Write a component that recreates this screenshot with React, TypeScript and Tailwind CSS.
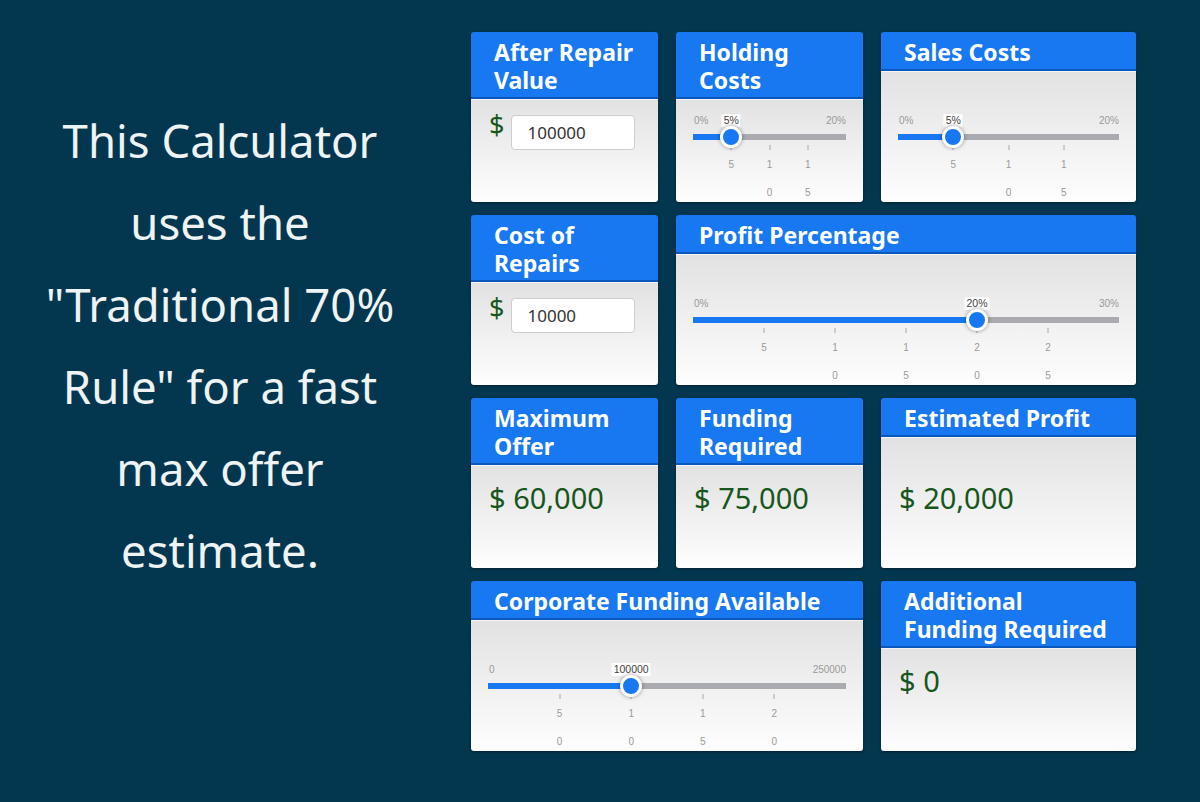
import React from "react";

type Tick = { at: number; top: string; bottom: string };

type SliderProps = {
  min: number;
  max: number;
  value: number;
  minLabel: string;
  maxLabel: string;
  valueLabel: string;
  ticks: Tick[];
};

const BLUE = "bg-[#1878f2]";

function Slider({ min, max, value, minLabel, maxLabel, valueLabel, ticks }: SliderProps) {
  const pct = (v: number) => ((v - min) / (max - min)) * 100;
  const p = pct(value);
  return (
    <div className="mt-auto px-[17px]">
      <div className="relative h-[90px] font-['Liberation_Sans',Arial,sans-serif]">
        <span className="absolute left-[1px] top-[3px] text-[10px] leading-[12px] text-[#9a9a9a]">{minLabel}</span>
        <span className="absolute right-0 top-[3px] text-[10px] leading-[12px] text-[#9a9a9a]">{maxLabel}</span>

        {/* track */}
        <div className="absolute left-0 right-0 top-[22px] h-[6px] bg-[#a9abb0]" />
        <div className={`absolute left-0 top-[22px] h-[6px] ${BLUE}`} style={{ width: `${p}%` }} />

        {/* scale */}
        {ticks.map((t) => (
          <React.Fragment key={t.at}>
            <div
              className="absolute top-[33px] h-[5px] w-px -translate-x-1/2 bg-[#a5a5a5]"
              style={{ left: `${pct(t.at)}%` }}
            />
            <span
              className="absolute top-[47px] -translate-x-1/2 text-[10px] leading-[12px] text-[#9a9a9a]"
              style={{ left: `${pct(t.at)}%` }}
            >
              {t.top}
            </span>
            <span
              className="absolute top-[75px] -translate-x-1/2 text-[10px] leading-[12px] text-[#9a9a9a]"
              style={{ left: `${pct(t.at)}%` }}
            >
              {t.bottom}
            </span>
          </React.Fragment>
        ))}

        {/* current value bubble */}
        <span
          className="absolute top-[2px] -translate-x-1/2 bg-white px-[2px] text-[10.5px] leading-[13px] text-[#444]"
          style={{ left: `${p}%` }}
        >
          {valueLabel}
        </span>

        {/* handle */}
        <div
          className={`absolute top-[14px] h-[22px] w-[22px] -translate-x-1/2 rounded-full border-[3px] border-white ${BLUE} shadow-[0_0_4px_rgba(0,0,0,0.4)]`}
          style={{ left: `${p}%` }}
        />
      </div>
    </div>
  );
}

function Card({
  title,
  className = "",
  bodyClass = "",
  children,
}: {
  title: React.ReactNode;
  className?: string;
  bodyClass?: string;
  children?: React.ReactNode;
}) {
  return (
    <div
      className={`flex flex-col overflow-hidden rounded-[3px] shadow-[0_1px_3px_rgba(0,0,0,0.4)] ${className}`}
    >
      <div className="border-b-2 border-[#0a58bb] bg-[#1878f2] pb-[3px] pl-[23px] pr-2 pt-[6px] text-[23px] font-bold leading-[28px] text-white">
        {title}
      </div>
      <div className={`flex flex-1 flex-col border-t border-[#f4f4f4] bg-linear-to-b from-[#e2e2e2] to-[#fefefe] ${bodyClass}`}>
        {children}
      </div>
    </div>
  );
}

function MoneyInput({ value }: { value: string }) {
  return (
    <div className="flex items-start gap-[7px] pl-[18px] pt-[15px]">
      <span className="-mt-[6px] text-[27px] leading-[32px] text-[#17561c]">$</span>
      <input
        readOnly
        defaultValue={value}
        className="h-[35px] w-[124px] rounded-[4px] border border-[#cdcdcd] bg-white pl-[15px] font-['Noto_Sans',sans-serif] text-[17px] text-[#333] outline-none"
      />
    </div>
  );
}

function Amount({ children, pad }: { children: React.ReactNode; pad: string }) {
  return <div className={`pl-[18px] text-[29px] leading-[38px] text-[#17561c] ${pad}`}>{children}</div>;
}

const pctTicks20: Tick[] = [
  { at: 5, top: "5", bottom: "" },
  { at: 10, top: "1", bottom: "0" },
  { at: 15, top: "1", bottom: "5" },
];

export default function App() {
  return (
    <div className="flex h-[802px] w-full overflow-hidden bg-[#03374f] font-['Noto_Sans','Open_Sans',sans-serif]">
      <div className="w-[440px] shrink-0 pt-[99px] text-center text-[45.5px] leading-[82px] text-[#eef3f4]">
        This Calculator
        <br />
        uses the
        <br />
        "Traditional 70%
        <br />
        Rule" for a fast
        <br />
        max offer
        <br />
        estimate.
      </div>

      <div className="ml-[31px] grid grid-cols-[187px_187px_255px] grid-rows-[repeat(4,170px)] gap-x-[18px] gap-y-[13px] pt-[32px]">
        <Card title={<>After Repair<br />Value</>}>
          <MoneyInput value="100000" />
        </Card>
        <Card title={<>Holding<br />Costs</>}>
          <Slider min={0} max={20} value={5} minLabel="0%" maxLabel="20%" valueLabel="5%" ticks={pctTicks20} />
        </Card>
        <Card title="Sales Costs">
          <Slider min={0} max={20} value={5} minLabel="0%" maxLabel="20%" valueLabel="5%" ticks={pctTicks20} />
        </Card>

        <Card title={<>Cost of<br />Repairs</>}>
          <MoneyInput value="10000" />
        </Card>
        <Card title="Profit Percentage" className="col-span-2">
          <Slider
            min={0}
            max={30}
            value={20}
            minLabel="0%"
            maxLabel="30%"
            valueLabel="20%"
            ticks={[
              { at: 5, top: "5", bottom: "" },
              { at: 10, top: "1", bottom: "0" },
              { at: 15, top: "1", bottom: "5" },
              { at: 20, top: "2", bottom: "0" },
              { at: 25, top: "2", bottom: "5" },
            ]}
          />
        </Card>

        <Card title={<>Maximum<br />Offer</>}>
          <Amount pad="pt-[13px]">$ 60,000</Amount>
        </Card>
        <Card title={<>Funding<br />Required</>}>
          <Amount pad="pt-[13px]">$ 75,000</Amount>
        </Card>
        <Card title="Estimated Profit">
          <Amount pad="pt-[41px]">$ 20,000</Amount>
        </Card>

        <Card title="Corporate Funding Available" className="col-span-2">
          <Slider
            min={0}
            max={250000}
            value={100000}
            minLabel="0"
            maxLabel="250000"
            valueLabel="100000"
            ticks={[
              { at: 50000, top: "5", bottom: "0" },
              { at: 100000, top: "1", bottom: "0" },
              { at: 150000, top: "1", bottom: "5" },
              { at: 200000, top: "2", bottom: "0" },
            ]}
          />
        </Card>
        <Card title={<>Additional<br />Funding Required</>}>
          <Amount pad="pt-[13px]">$ 0</Amount>
        </Card>
      </div>
    </div>
  );
}
